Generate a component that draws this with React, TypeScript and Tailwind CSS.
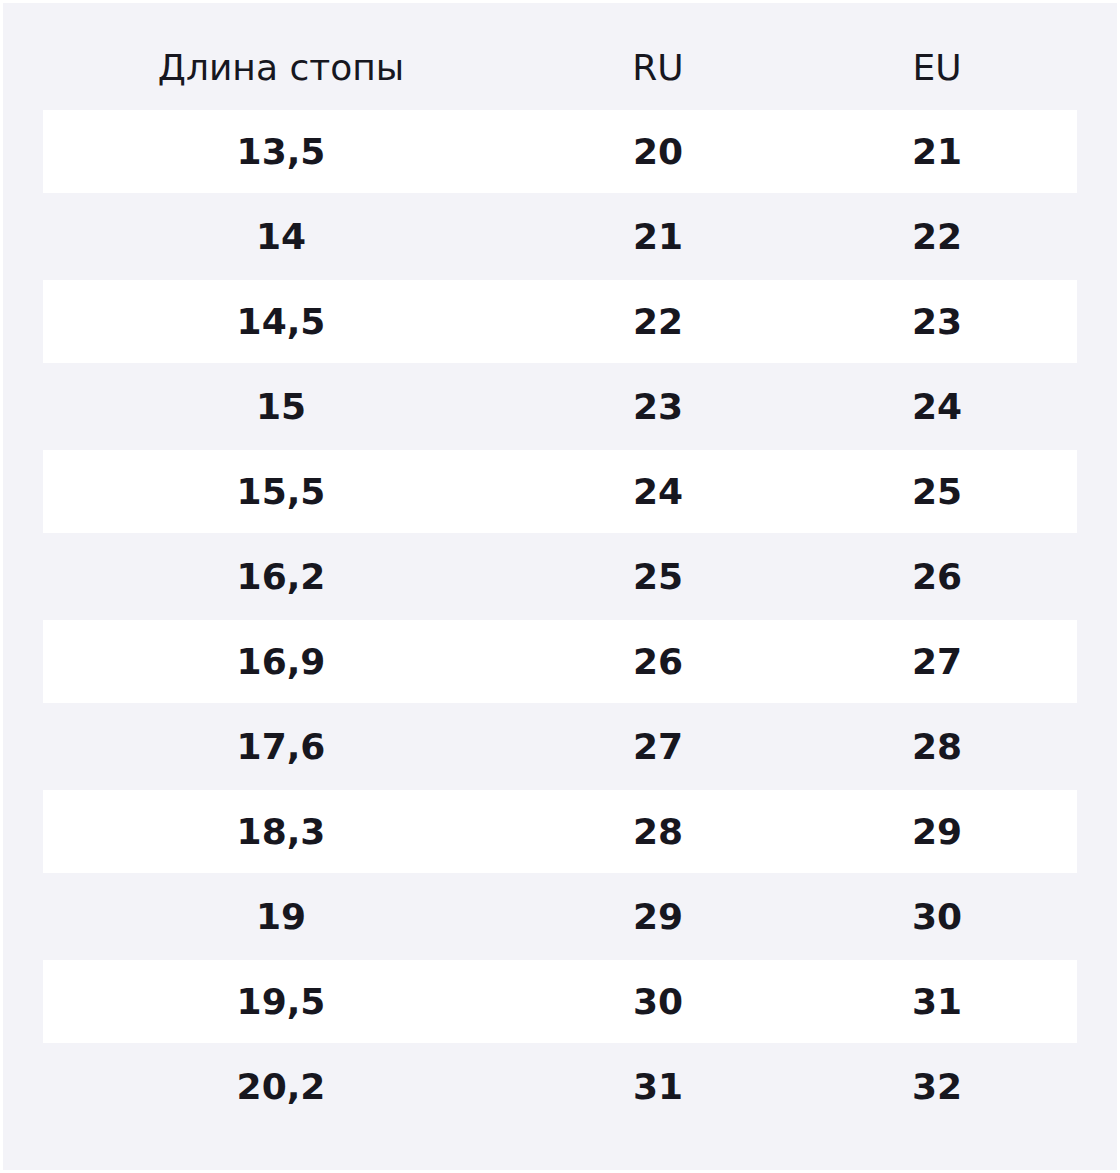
import React from "react";

const rows: [string, string, string][] = [
  ["13,5", "20", "21"],
  ["14", "21", "22"],
  ["14,5", "22", "23"],
  ["15", "23", "24"],
  ["15,5", "24", "25"],
  ["16,2", "25", "26"],
  ["16,9", "26", "27"],
  ["17,6", "27", "28"],
  ["18,3", "28", "29"],
  ["19", "29", "30"],
  ["19,5", "30", "31"],
  ["20,2", "31", "32"],
];

export default function App() {
  return (
    <div className="w-[1120px] h-[1173px] bg-white p-[3px]" style={{ fontFamily: '"DejaVu Sans", sans-serif' }}>
      <div className="w-[1114px] h-[1167px] bg-[#f3f3f8] px-[40px] pt-[22px] pb-[40px] text-[#17171f]">
        <div className="grid grid-cols-[476px_278px_280px] h-[85px] items-center text-[36px] text-center">
          <div>Длина стопы</div>
          <div>RU</div>
          <div>EU</div>
        </div>
        {rows.map((r, i) => (
          <div
            key={i}
            className={
              "grid grid-cols-[476px_278px_280px] items-center text-[36px] font-bold text-center " +
              (i % 2 === 0 ? "bg-white h-[83px]" : "bg-[#f3f3f8] h-[87px]")
            }
          >
            <div>{r[0]}</div>
            <div>{r[1]}</div>
            <div>{r[2]}</div>
          </div>
        ))}
      </div>
    </div>
  );
}
